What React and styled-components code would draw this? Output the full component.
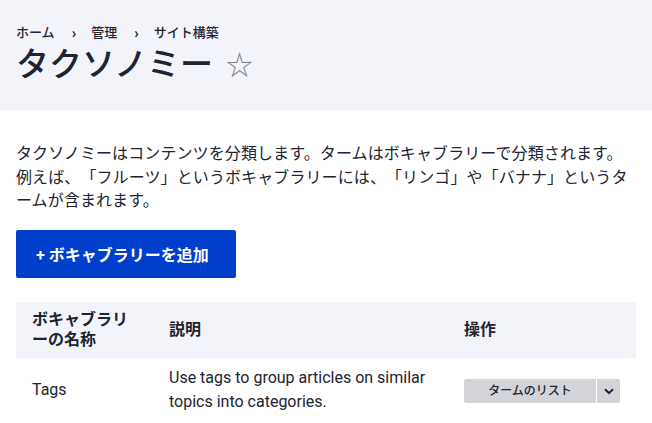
import styled, { createGlobalStyle } from "styled-components";

//#region Estilos
const Global = createGlobalStyle`
  html, body {
    margin: 0;
    padding: 0;
    background: #fff;
  }
  body {
    font-family: Roboto, "Noto Sans CJK JP", sans-serif;
    color: #222330;
    text-spacing-trim: space-all;
  }
`;

const Header = styled.div`
  background: #f3f4f9;
  height: 110px;
  padding: 24px 16px 0;
  box-sizing: border-box;
`;

const Breadcrumb = styled.ol`
  display: flex;
  align-items: center;
  list-style: none;
  margin: 0;
  padding: 0;
  font-size: 13px;
  font-weight: 500;
  line-height: 18px;
  color: #222330;
`;

const Crumb = styled.li`
  display: flex;
  align-items: center;
  &:not(:last-child)::after {
    content: "›";
    display: inline-block;
    font-size: 15px;
    font-weight: 700;
    margin: 0 15px 0 17px;
  }
`;

const TitleRow = styled.div`
  display: flex;
  align-items: center;
  gap: 13px;
  margin-top: 1px;
`;

const Title = styled.h1`
  margin: 0;
  font-size: 33px;
  font-weight: 500;
  line-height: 44px;
  color: #222330;
`;

const Star = styled.span`
  font-size: 27px;
  color: #828388;
  line-height: 1;
  margin-top: 2px;
`;

const Content = styled.div`
  padding: 32px 16px 0;
`;

const Intro = styled.p`
  margin: 0;
  padding-right: 4px;
  font-size: 16px;
  letter-spacing: 0.1px;
  line-height: 23.5px;
  color: #222330;
`;

const AddButton = styled.a`
  display: inline-flex;
  align-items: center;
  height: 48px;
  margin-top: 17px;
  padding: 0 24px 0 20px;
  background: #003ecc;
  color: #fff;
  border-radius: 2px;
  font-size: 16px;
  font-weight: 600;
  text-decoration: none;
  box-sizing: border-box;
  width: 220px;
`;

const Table = styled.table`
  width: 100%;
  margin-top: 24px;
  border-collapse: collapse;
  table-layout: fixed;
  font-size: 16px;
`;

const Th = styled.th`
  background: #f3f4f9;
  text-align: left;
  font-weight: 600;
  height: 56px;
  padding: 0 16px;
  line-height: 20px;
  vertical-align: middle;
  width: ${(p) => p.$w || "auto"};
  box-sizing: border-box;
`;

const Td = styled.td`
  height: 65px;
  padding: 0 16px;
  line-height: 24px;
  border-bottom: 1px solid #d3d4d9;
  vertical-align: middle;
  color: #222330;
`;

const DropButton = styled.div`
  display: inline-flex;
  height: 24px;
  border-radius: 2px;
  background: #d3d4d9;
  overflow: hidden;
  margin-top: 2px;
`;

const DropMain = styled.span`
  display: flex;
  align-items: center;
  justify-content: center;
  width: 132px;
  font-size: 12px;
  font-weight: 500;
  color: #222330;
`;

const DropToggle = styled.span`
  display: flex;
  align-items: center;
  justify-content: center;
  width: 23px;
  border-left: 1px solid #fff;
`;
//#endregion

const App = () => {
  return (
    <>
      <Global />
      <Header>
        <Breadcrumb>
          <Crumb>ホーム</Crumb>
          <Crumb>管理</Crumb>
          <Crumb>サイト構築</Crumb>
        </Breadcrumb>
        <TitleRow>
          <Title>タクソノミー</Title>
          <Star>☆</Star>
        </TitleRow>
      </Header>
      <Content>
        <Intro>
          タクソノミーはコンテンツを分類します。タームはボキャブラリーで分類されます。例えば、「フルーツ」というボキャブラリーには、「リンゴ」や「バナナ」というタームが含まれます。
        </Intro>
        <AddButton href="#">+ ボキャブラリーを追加</AddButton>
        <Table>
          <thead>
            <tr>
              <Th $w="137px">ボキャブラリーの名称</Th>
              <Th $w="295px">説明</Th>
              <Th>操作</Th>
            </tr>
          </thead>
          <tbody>
            <tr>
              <Td>Tags</Td>
              <Td>Use tags to group articles on similar topics into categories.</Td>
              <Td>
                <DropButton>
                  <DropMain>タームのリスト</DropMain>
                  <DropToggle>
                    <svg width="10" height="7" viewBox="0 0 10 7">
                      <path d="M1 1.2 L5 5.2 L9 1.2" fill="none" stroke="#222330" strokeWidth="2" />
                    </svg>
                  </DropToggle>
                </DropButton>
              </Td>
            </tr>
          </tbody>
        </Table>
      </Content>
    </>
  );
};

export default App;
